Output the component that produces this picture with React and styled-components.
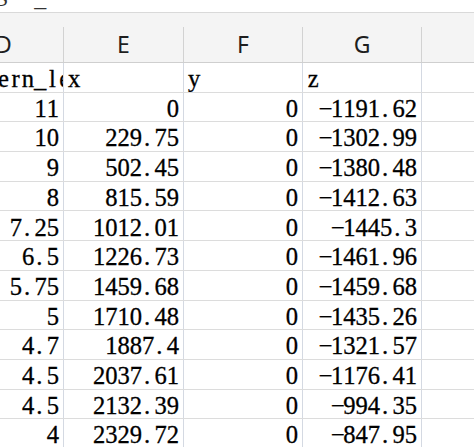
import React from 'react';
import styled, { createGlobalStyle } from 'styled-components';

const GlobalStyle = createGlobalStyle`
  html, body {
    margin: 0;
    padding: 0;
    background: #fff;
    overflow: hidden;
  }
`;

const Page = styled.div`
  width: 474px;
  height: 447px;
  overflow: hidden;
  background: #fff;
`;

// bottom edge of the formula bar text, cut off by the window
const FormulaStrip = styled.div`
  display: flex;
  gap: 26px;
  height: 12px;
  overflow: hidden;
  border-bottom: 1px solid #d9d9d9;
  font-family: "Liberation Serif", serif;
  font-size: 24px;
  color: #333;
  line-height: 24px;
  padding-left: 0;
  margin-left: -5px;

  span {
    display: block;
    margin-top: -14px;
  }
`;

const Sheet = styled.div`
  margin-left: -56px;
`;

const cols = '120px 120px 119px 119px 120px';

const HeaderRow = styled.div`
  display: grid;
  grid-template-columns: ${cols};
  height: 50px;
  box-sizing: border-box;
  background: #f4f4f4;
  border-bottom: 1px solid #cfcfcf;
`;

const HeadCell = styled.div`
  box-sizing: border-box;
  padding-top: 20px;
  text-align: center;
  font-family: "Noto Sans", sans-serif;
  font-size: 23px;
  line-height: 1;
  color: #1e1e1e;
  border-right: 1px solid transparent;
  border-image: linear-gradient(to bottom, transparent 30%, #d2d2d2 30%) 1;
  &:last-child {
    border-image: none;
    border-right: none;
  }
`;

const Row = styled.div`
  display: grid;
  grid-template-columns: ${cols};
  height: 29.7px;
  box-sizing: border-box;
  border-bottom: 1px solid #dcdcdc;
`;

const Cell = styled.div`
  box-sizing: border-box;
  display: flex;
  align-items: flex-end;
  justify-content: ${(p) => (p.$text ? 'flex-start' : 'flex-end')};
  padding: ${(p) => (p.$text ? '0 0 0 4px' : '0 4px 0 0')};
  overflow: hidden;
  white-space: nowrap;
  border-right: 1px solid #d4d9e2;
  font-family: "Liberation Serif", serif;
  font-size: 24.6px;
  line-height: 1;
  color: #000;
  -webkit-text-stroke: 0.3px #000;
  &:last-child {
    border-right: none;
  }
`;

// half-width glyph cells, like the sheet's default font
const Ch = styled.span`
  display: inline-block;
  width: 0.5em;
  text-align: ${(p) => (p.$dot ? 'left' : 'center')};
  padding-left: ${(p) => (p.$dot ? '0.08em' : '0')};
  box-sizing: border-box;
  overflow: visible;
  flex: none;
`;

const Glyphs = ({ value }) =>
  String(value)
    .split('')
    .map((c, i) => (
      <Ch key={i} $dot={c === '.'}>
        {c === '-' ? '\u2212' : c}
      </Ch>
    ));

const rows = [
  ['pattern_length', 'x', 'y', 'z'],
  ['11', '0', '0', '-1191.62'],
  ['10', '229.75', '0', '-1302.99'],
  ['9', '502.45', '0', '-1380.48'],
  ['8', '815.59', '0', '-1412.63'],
  ['7.25', '1012.01', '0', '-1445.3'],
  ['6.5', '1226.73', '0', '-1461.96'],
  ['5.75', '1459.68', '0', '-1459.68'],
  ['5', '1710.48', '0', '-1435.26'],
  ['4.7', '1887.4', '0', '-1321.57'],
  ['4.5', '2037.61', '0', '-1176.41'],
  ['4.5', '2132.39', '0', '-994.35'],
  ['4', '2329.72', '0', '-847.95'],
];

const App = () => (
  <Page>
    <GlobalStyle />
    <FormulaStrip>
      <span>S</span>
      <span>_</span>
    </FormulaStrip>
    <Sheet>
      <HeaderRow>
        {['D', 'E', 'F', 'G', 'H'].map((c) => (
          <HeadCell key={c}>{c === 'H' ? '' : c}</HeadCell>
        ))}
      </HeaderRow>
      {rows.map((r, i) => (
        <Row key={i}>
          {r.map((v, j) => {
            const isText = isNaN(Number(v));
            return (
              <Cell key={j} $text={isText}>
                <Glyphs value={v} />
              </Cell>
            );
          })}
          <Cell />
        </Row>
      ))}
    </Sheet>
  </Page>
);

export default App;
